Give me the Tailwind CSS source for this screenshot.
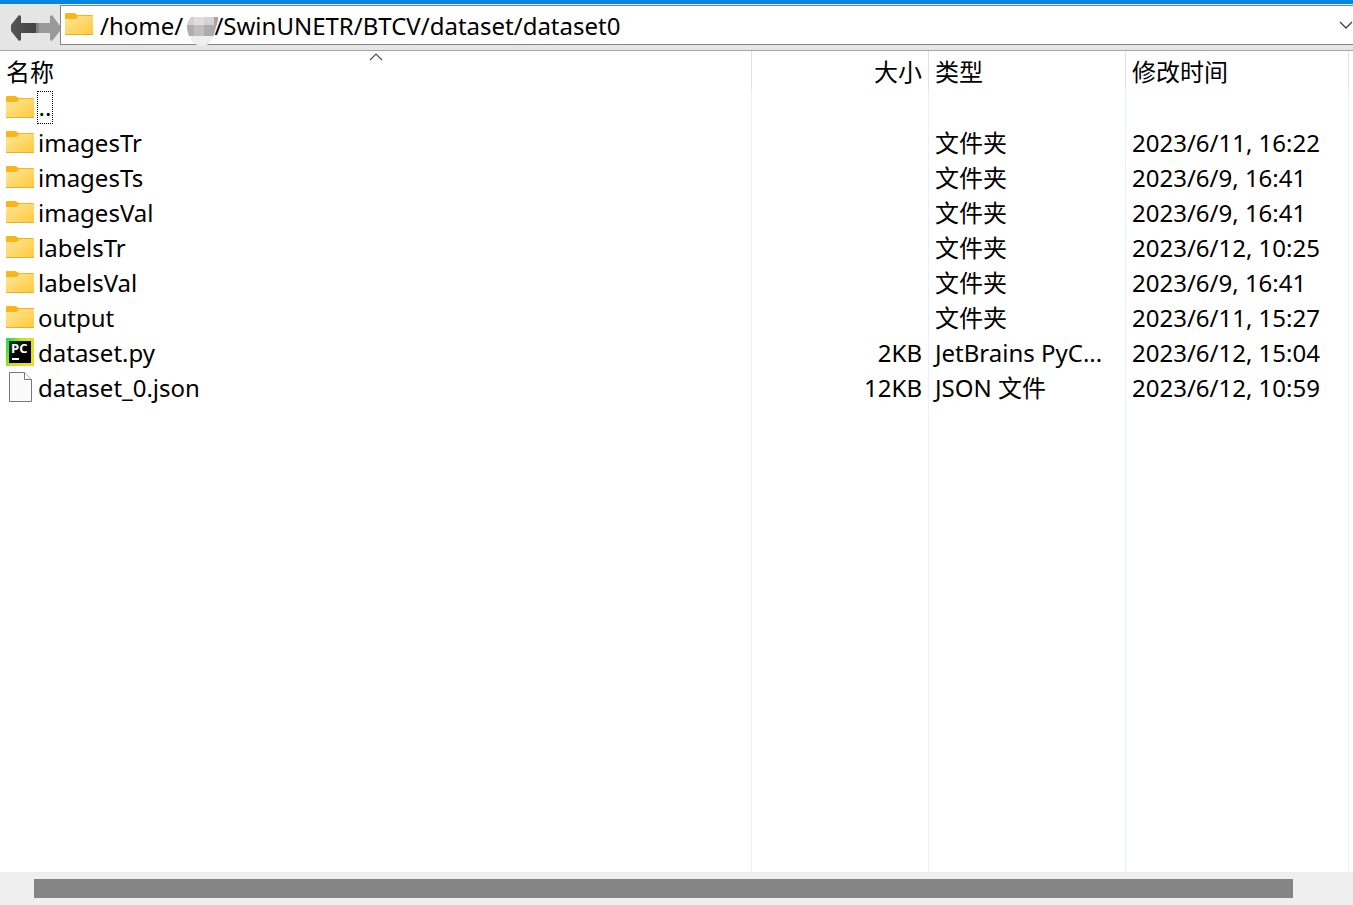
<!DOCTYPE html>
<html lang="zh-CN">
<head>
<meta charset="utf-8">
<title>dataset0</title>
<script src="https://cdn.jsdelivr.net/npm/@tailwindcss/browser@4"></script>
</head>
<body class="flex h-screen flex-col overflow-hidden bg-white font-['Noto_Sans','Noto_Sans_CJK_SC',sans-serif] text-[24px] leading-[35px] text-black">
<svg class="absolute h-0 w-0" aria-hidden="true">
  <defs>
    <linearGradient id="fold" x1="0" y1="0" x2="1" y2="1"><stop offset="0" stop-color="#ffe69c"/><stop offset="1" stop-color="#ffc938"/></linearGradient>
    <linearGradient id="pyc" x1="0" y1="0" x2="1" y2="0.4"><stop offset="0" stop-color="#21d789"/><stop offset="0.15" stop-color="#3fdc3c"/><stop offset="0.5" stop-color="#c8e31c"/><stop offset="1" stop-color="#e8df25"/></linearGradient>
    <linearGradient id="ink" x1="0" y1="0" x2="1" y2="1"><stop offset="0" stop-color="#10402c"/><stop offset="0.5" stop-color="#000"/></linearGradient>
    <linearGradient id="al" x1="0" x2="1"><stop offset="0" stop-color="#555"/><stop offset="1" stop-color="#444"/></linearGradient>
  </defs>
  <symbol id="folder" viewBox="0 0 28 22">
    <path d="M0 1Q0 0 1 0H9Q10 0 11 1L13 2H27Q28 2 28 3V8H0Z" fill="#f9b616"/>
    <path d="M0 6H10Q11 6 12 5L13 3H28V21Q28 22 27 22H1Q0 22 0 21Z" fill="url(#fold)"/>
    <path d="M0 21.5H28" stroke="#e5b135"/>
  </symbol>
</svg>

<header class="shrink-0 border-b border-[#a5a5a5] bg-[#e5e5e5]">
  <div class="h-1 bg-[#0087e0]"></div>
  <div class="flex h-[46px] items-start pt-px">
    <div class="flex h-10 w-[60px] shrink-0 items-center pt-1.5 pl-[11px]">
      <button type="button" aria-label="后退" class="h-7 w-[25px]"><svg width="25" height="28" viewBox="0 0 25 28"><path d="M0 14V11L8 1L10 2V9H25V19H10V26L8 27L0 17Z" fill="url(#al)"/></svg></button>
      <button type="button" aria-label="前进" class="h-7 w-6"><svg width="24" height="28" viewBox="0 0 24 28"><path d="M24 14V12L16 1L14 2V9H0V19H14V26L16 27L24 17Z" fill="#999"/><path d="M0 9H3V19H0Z" fill="#808080"/></svg></button>
    </div>
    <div class="relative flex h-10 min-w-0 flex-1 items-center border border-r-0 border-[#858585] bg-white pl-1">
      <svg class="mb-0.5 h-[22px] w-7 shrink-0"><use href="#folder"/></svg>
      <input type="text" aria-label="路径" value="/home/     /SwinUNETR/BTCV/dataset/dataset0" class="ml-[7px] h-[38px] min-w-0 flex-1 bg-transparent outline-none">
      <svg class="absolute -top-px left-[126px]" width="31" height="42" viewBox="0 0 31 42" aria-hidden="true">
        <clipPath id="blob"><path d="M0 23Q0 16 4 12H32L27 29Q25 41 14 41Q2 39 0 23Z"/></clipPath>
        <g clip-path="url(#blob)"><path d="M0 10H32V42H0Z" fill="#efefef"/><path d="M0 11H7V20H0Z" fill="#d2d2d6"/><path d="M7 11H17V20H7Z" fill="#dedee0"/><path d="M17 11H27V20H17Z" fill="#d4d4d7"/><path d="M27 11H31V20H27Z" fill="#aaa5a4"/><path d="M0 20H7V31H0Z" fill="#b1adad"/><path d="M7 20H17V31H7Z" fill="#c0bfbe"/><path d="M17 20H31V31H17Z" fill="#aeabaa"/></g>
      </svg>
      <button type="button" aria-label="展开路径列表" class="h-[38px] w-4 shrink-0"><svg width="16" height="38" viewBox="0 0 16 38"><path d="M3 16L9 22L15 16" fill="none" stroke="#404040" stroke-width="1.3"/></svg></button>
    </div>
  </div>
</header>

<main class="min-h-0 flex-1">
  <table class="h-full w-full table-fixed border-separate border-spacing-0 whitespace-nowrap [&_td]:border-r [&_td]:border-[#e8f1fb] [&_td]:p-0 [&_td]:px-1.5 [&_td:last-child]:border-0 [&_th]:border-r [&_th]:border-[#e2e2e2] [&_th]:p-0 [&_th]:px-1.5 [&_th]:pt-px [&_th]:font-normal [&_th:last-child]:border-0 [&_td:nth-child(2)]:text-right">
    <colgroup><col><col class="w-[177px]"><col class="w-[197px]"><col class="w-[223px]"><col class="w-1"></colgroup>
    <thead>
      <tr class="h-[39px] text-left">
        <th class="relative"><button type="button">名称</button><svg class="absolute top-0.5 left-1/2 -translate-x-1/2" width="14" height="8" viewBox="0 0 14 8" aria-hidden="true"><path d="M1 7L7 1L13 7" fill="none" stroke="#505050" stroke-width="1.2"/></svg></th>
        <th class="text-right"><button type="button">大小</button></th><th><button type="button">类型</button></th><th><button type="button">修改时间</button></th><th></th>
      </tr>
    </thead>
    <tbody>
      <tr class="h-[35px]"><td><div class="flex items-center gap-[3px]"><svg class="mb-0.5 h-[22px] w-7"><use href="#folder"/></svg><a href="#" class="h-[33px] w-4 border border-dotted border-black text-center leading-[30px]">..</a></div></td><td></td><td></td><td></td><td></td></tr>
      <tr class="h-[35px]"><td><div class="flex items-center gap-1"><svg class="mb-0.5 h-[22px] w-7"><use href="#folder"/></svg><span>imagesTr</span></div></td><td></td><td>文件夹</td><td>2023/6/11, 16:22</td><td></td></tr>
      <tr class="h-[35px]"><td><div class="flex items-center gap-1"><svg class="mb-0.5 h-[22px] w-7"><use href="#folder"/></svg><span>imagesTs</span></div></td><td></td><td>文件夹</td><td>2023/6/9, 16:41</td><td></td></tr>
      <tr class="h-[35px]"><td><div class="flex items-center gap-1"><svg class="mb-0.5 h-[22px] w-7"><use href="#folder"/></svg><span>imagesVal</span></div></td><td></td><td>文件夹</td><td>2023/6/9, 16:41</td><td></td></tr>
      <tr class="h-[35px]"><td><div class="flex items-center gap-1"><svg class="mb-0.5 h-[22px] w-7"><use href="#folder"/></svg><span>labelsTr</span></div></td><td></td><td>文件夹</td><td>2023/6/12, 10:25</td><td></td></tr>
      <tr class="h-[35px]"><td><div class="flex items-center gap-1"><svg class="mb-0.5 h-[22px] w-7"><use href="#folder"/></svg><span>labelsVal</span></div></td><td></td><td>文件夹</td><td>2023/6/9, 16:41</td><td></td></tr>
      <tr class="h-[35px]"><td><div class="flex items-center gap-1"><svg class="mb-0.5 h-[22px] w-7"><use href="#folder"/></svg><span>output</span></div></td><td></td><td>文件夹</td><td>2023/6/11, 15:27</td><td></td></tr>
      <tr class="h-[35px]"><td><div class="flex items-center gap-1"><svg class="mb-0.5 h-7 w-7" viewBox="0 0 28 28"><path d="M0 0H28V28H0Z" fill="url(#pyc)"/><path d="M3 3H25V25H3Z" fill="url(#ink)"/><text x="5" y="15" font-family="Open Sans, sans-serif" font-weight="700" font-size="13" fill="#fff">PC</text><path d="M6 20H13V22H6Z" fill="#fff"/></svg><span>dataset.py</span></div></td><td>2KB</td><td>JetBrains PyC...</td><td>2023/6/12, 15:04</td><td></td></tr>
      <tr class="h-[35px]"><td><div class="flex items-center gap-1"><svg class="mb-px h-[30px] w-7" viewBox="0 0 28 30"><path d="M3.5 .5H18.500L25.500 7.500V29.500H3.500Z" fill="#fafafa" stroke="#777"/><path d="M18.500 .5V7.500H25.500" fill="#fff" stroke="#777"/></svg><span>dataset_0.json</span></div></td><td>12KB</td><td>JSON 文件</td><td>2023/6/12, 10:59</td><td></td></tr>
      <tr><td></td><td></td><td></td><td></td><td></td></tr>
    </tbody>
  </table>
</main>

<footer class="h-[33px] shrink-0 bg-[#efefef] pt-[7px] pr-[60px] pl-[34px]">
  <div role="scrollbar" aria-label="水平滚动" aria-orientation="horizontal" aria-valuenow="0" class="h-[19px] bg-[#858585]"></div>
</footer>
</body>
</html>
